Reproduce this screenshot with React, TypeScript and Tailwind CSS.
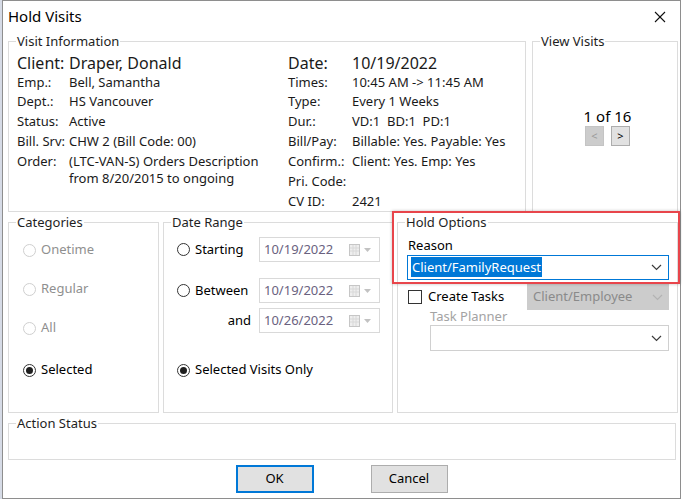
import type { ReactNode } from "react";

function GroupBox({ title, className, children }: { title: string; className?: string; children?: ReactNode }) {
  return (
    <fieldset className={`border border-[#dcdcdc] px-[8px] ${className ?? ""}`}>
      <legend className="px-[1px] -ml-[1px] text-[13px] leading-[16px] text-[#1e1e1e]">{title}</legend>
      {children}
    </fieldset>
  );
}

function Radio({ checked, disabled }: { checked?: boolean; disabled?: boolean }) {
  return (
    <span
      className={`flex h-[13px] w-[13px] shrink-0 items-center justify-center rounded-full border bg-white ${
        disabled ? "border-[#cfcfcf]" : "border-[#333333]"
      }`}
    >
      {checked && <span className="h-[7px] w-[7px] rounded-full bg-[#1f1f1f]" />}
    </span>
  );
}

function Chevron({ color = "#3c3c3c" }: { color?: string }) {
  return (
    <svg width="11" height="7" viewBox="0 0 11 7" className="shrink-0">
      <polyline points="1,1 5.5,5.5 10,1" fill="none" stroke={color} strokeWidth="1.2" />
    </svg>
  );
}

function DateBox({ value }: { value: string }) {
  return (
    <div className="flex h-[25px] w-[121px] items-center border border-[#d9d9d9] bg-white pl-[4px] pr-[8px]">
      <span className="flex-1 text-[13px] text-[#6a6280]">{value}</span>
      <svg width="11" height="12" viewBox="0 0 11 12" className="mr-[4px]">
        <rect x="0.5" y="0.5" width="10" height="11" fill="#eeeeee" stroke="#c6c6c6" />
        <line x1="1" y1="4" x2="10" y2="4" stroke="#d8d8d8" />
        <line x1="1" y1="7" x2="10" y2="7" stroke="#d8d8d8" />
        <line x1="4" y1="1" x2="4" y2="11" stroke="#d8d8d8" />
        <line x1="7" y1="1" x2="7" y2="11" stroke="#d8d8d8" />
      </svg>
      <svg width="7" height="4" viewBox="0 0 7 4">
        <polygon points="0,0 7,0 3.5,4" fill="#c2c2c2" />
      </svg>
    </div>
  );
}

function InfoRow({ label, value, w, h, big }: { label: string; value: ReactNode; w: string; h: string; big?: boolean }) {
  return (
    <div className={`flex items-center ${h} ${big ? "text-[16px] leading-[18px]" : "text-[13px] leading-[16px]"}`}>
      <span className={`${w} shrink-0 whitespace-nowrap`}>{label}</span>
      <span className="whitespace-pre">{value}</span>
    </div>
  );
}

export default function App() {
  return (
    <div className="flex h-[500px] w-[682px] bg-white font-['Noto_Sans','Open_Sans',sans-serif] text-[#1a1a1a]">
      <div className="h-[499px] w-[2px] bg-[#d6dbe6]" />
      <div className="relative flex h-[499px] w-[679px] flex-col border border-[#8e8e8e] bg-white">
        {/* title bar */}
        <div className="flex h-[31px] items-center justify-between pl-[5px] pr-[14px]">
          <span className="text-[15px] text-black">Hold Visits</span>
          <svg width="12" height="12" viewBox="0 0 12 12">
            <line x1="1" y1="1" x2="11" y2="11" stroke="#111" strokeWidth="1.1" />
            <line x1="11" y1="1" x2="1" y2="11" stroke="#111" strokeWidth="1.1" />
          </svg>
        </div>

        <div className="flex flex-col pl-[5px] pr-[2px]">
          {/* row 1 */}
          <div className="mt-[1px] flex gap-[6px]">
            <GroupBox title="Visit Information" className="h-[179px] w-[518px]">
              <div className="flex pt-[5px]">
                <div className="w-[271px]">
                  <InfoRow big label="Client:" value="Draper, Donald" w="w-[52px]" h="h-[18px]" />
                  <InfoRow label="Emp.:" value="Bell, Samantha" w="w-[52px]" h="h-[19px]" />
                  <InfoRow label="Dept.:" value="HS Vancouver" w="w-[52px]" h="h-[20px]" />
                  <InfoRow label="Status:" value="Active" w="w-[52px]" h="h-[20px]" />
                  <InfoRow label="Bill. Srv:" value="CHW 2 (Bill Code: 00)" w="w-[52px]" h="h-[20px]" />
                  <div className="mt-[2px] flex text-[13px] leading-[17px]">
                    <span className="w-[52px] shrink-0">Order:</span>
                    <span>
                      (LTC-VAN-S) Orders Description
                      <br />
                      from 8/20/2015 to ongoing
                    </span>
                  </div>
                </div>
                <div className="flex-1">
                  <InfoRow big label="Date:" value="10/19/2022" w="w-[64px]" h="h-[18px]" />
                  <InfoRow label="Times:" value="10:45 AM -> 11:45 AM" w="w-[64px]" h="h-[19px]" />
                  <InfoRow label="Type:" value="Every 1 Weeks" w="w-[64px]" h="h-[20px]" />
                  <InfoRow label="Dur.:" value="VD:1  BD:1  PD:1" w="w-[64px]" h="h-[20px]" />
                  <InfoRow label="Bill/Pay:" value="Billable: Yes. Payable: Yes" w="w-[64px]" h="h-[20px]" />
                  <InfoRow label="Confirm.:" value="Client: Yes. Emp: Yes" w="w-[64px]" h="h-[20px]" />
                  <InfoRow label="Pri. Code:" value="" w="w-[64px]" h="h-[20px]" />
                  <InfoRow label="CV ID:" value="2421" w="w-[64px]" h="h-[20px]" />
                </div>
              </div>
            </GroupBox>

            <GroupBox title="View Visits" className="h-[179px] w-[146px]">
              <div className="flex flex-col items-center pl-[5px] pt-[58px]">
                <span className="text-[15px] leading-[18px] text-black">1 of 16</span>
                <div className="mt-[1px] flex gap-[7px]">
                  <div className="flex h-[20px] w-[19px] items-center justify-center border border-[#c4c4c4] bg-[#cccccc] text-[11px] text-[#9a9a9a]">
                    &lt;
                  </div>
                  <div className="flex h-[20px] w-[19px] items-center justify-center border border-[#adadad] bg-[#e1e1e1] text-[11px] text-black">
                    &gt;
                  </div>
                </div>
              </div>
            </GroupBox>
          </div>

          {/* row 2 */}
          <div className="mt-[2px] flex gap-[4px]">
            <GroupBox title="Categories" className="h-[199px] w-[151px]">
              <div className="flex flex-col pl-[6px] pt-[10px] text-[13px]">
                <label className="flex h-[20px] items-center gap-[5px] text-[#8f8f8f]">
                  <Radio disabled />
                  Onetime
                </label>
                <label className="mt-[19px] flex h-[20px] items-center gap-[5px] text-[#8f8f8f]">
                  <Radio disabled />
                  Regular
                </label>
                <label className="mt-[19px] flex h-[20px] items-center gap-[5px] text-[#8f8f8f]">
                  <Radio disabled />
                  All
                </label>
                <label className="mt-[22px] flex h-[20px] items-center gap-[5px] text-black">
                  <Radio checked />
                  Selected
                </label>
              </div>
            </GroupBox>

            <GroupBox title="Date Range" className="h-[199px] w-[230px]">
              <div className="flex flex-col pl-[5px] pt-[7px] text-[13px] text-black">
                <div className="flex items-center">
                  <label className="flex w-[82px] items-center gap-[5px]">
                    <Radio />
                    Starting
                  </label>
                  <DateBox value="10/19/2022" />
                </div>
                <div className="mt-[16px] flex items-center">
                  <label className="flex w-[82px] items-center gap-[5px]">
                    <Radio />
                    Between
                  </label>
                  <DateBox value="10/19/2022" />
                </div>
                <div className="mt-[5px] flex items-center">
                  <span className="w-[82px] pr-[8px] text-right">and</span>
                  <DateBox value="10/26/2022" />
                </div>
                <label className="mt-[27px] flex h-[20px] items-center gap-[5px]">
                  <Radio checked />
                  Selected Visits Only
                </label>
              </div>
            </GroupBox>

            <GroupBox title="Hold Options" className="h-[199px] w-[278px]">
              <div className="flex flex-col pl-[2px] pt-[7px] text-[13px] text-black">
                <span className="leading-[16px]">Reason</span>
                <div className="-ml-[1px] mt-[2px] flex h-[25px] w-[262px] items-center border border-[#0078d7] bg-white pl-[3px] pr-[6px]">
                  <span className="flex-1">
                    <span className="bg-[#0078d7] px-[1px] py-[1px] text-white">Client/FamilyRequest</span>
                  </span>
                  <Chevron />
                </div>
                <div className="mt-[4px] flex h-[26px] items-center">
                  <span className="h-[14px] w-[14px] shrink-0 border border-[#333333] bg-white" />
                  <span className="ml-[6px] w-[99px]">Create Tasks</span>
                  <div className="flex h-[26px] w-[142px] items-center bg-[#cccccc] pl-[6px] pr-[6px] text-[#8a8a8a]">
                    <span className="flex-1">Client/Employee</span>
                    <Chevron color="#b3b3b3" />
                  </div>
                </div>
                <span className="ml-[22px] leading-[13px] text-[#a3a3a3]">Task Planner</span>
                <div className="ml-[22px] mt-[2px] flex h-[26px] w-[239px] items-center border border-[#d0d0d0] bg-white pr-[6px]">
                  <span className="flex-1" />
                  <Chevron />
                </div>
              </div>
            </GroupBox>
          </div>

          {/* row 3 */}
          <GroupBox title="Action Status" className="mt-[2px] h-[45px] w-[668px]" />

          <div className="mt-[5px] flex justify-center gap-[57px] pr-[3px] text-[13px] text-black">
            <button className="h-[28px] w-[78px] border-2 border-[#0078d7] bg-[#e1e1e1]">OK</button>
            <button className="h-[28px] w-[77px] border border-[#adadad] bg-[#e1e1e1]">Cancel</button>
          </div>
        </div>

        {/* highlight annotation */}
        <div className="pointer-events-none absolute left-[389px] top-[210px] h-[73px] w-[288px] border-[2px] border-[#e8454b] shadow-[0_0_3px_rgba(0,0,0,0.25)]" />
      </div>
    </div>
  );
}
